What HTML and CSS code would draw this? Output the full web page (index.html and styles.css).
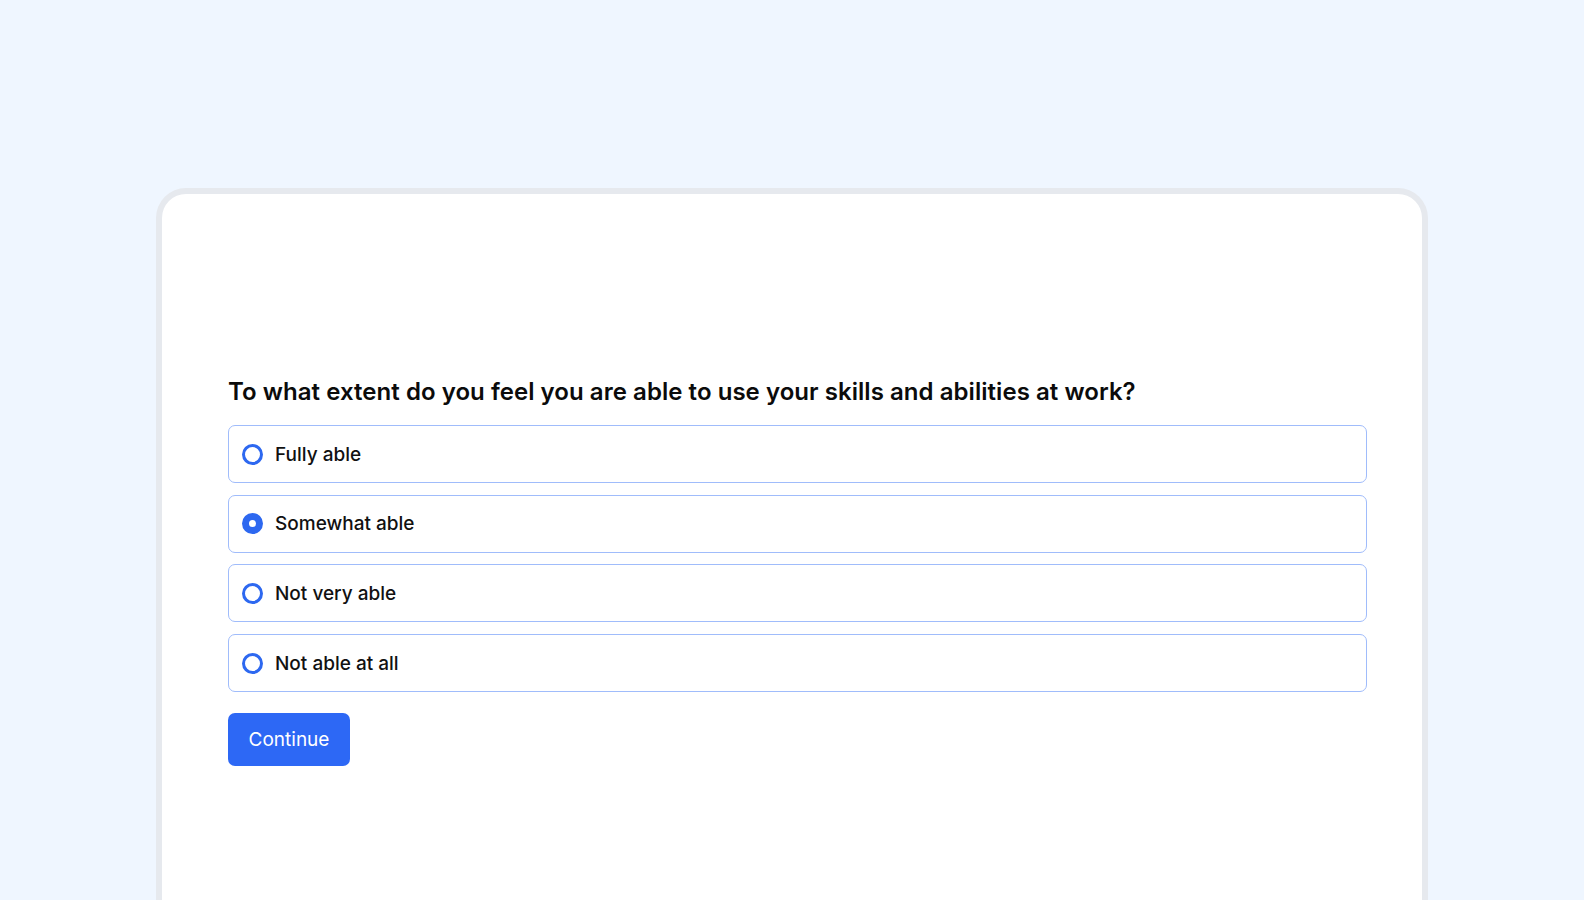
FILE: index.html
```html
<!DOCTYPE html>
<html lang="en">
<head>
    <meta charset="UTF-8">
    <meta name="viewport" content="width=device-width, initial-scale=1.0">
    <title>Survey</title>
    <link rel="stylesheet" href="styles.css">
</head>
<body>
    <div class="frame">
        <div class="card">
            <form class="question">
                <h2 class="title">To what extent do you feel you are able to use your skills and abilities at work?</h2>
                <div class="options">
                    <label class="option">
                        <input type="radio" name="skills" value="fully">
                        <span>Fully able</span>
                    </label>
                    <label class="option">
                        <input type="radio" name="skills" value="somewhat" checked>
                        <span>Somewhat able</span>
                    </label>
                    <label class="option">
                        <input type="radio" name="skills" value="not-very">
                        <span>Not very able</span>
                    </label>
                    <label class="option">
                        <input type="radio" name="skills" value="not-at-all">
                        <span>Not able at all</span>
                    </label>
                </div>
                <button type="button" class="continue">Continue</button>
            </form>
        </div>
    </div>
</body>
</html>
```

FILE: styles.css
```css
html, body {
    margin: 0;
    height: 100%;
}

body {
    background: #eff6ff;
    font-family: Inter, "Noto Sans", Arial, sans-serif;
    color: #111111;
    overflow: hidden;
}

.frame {
    height: 100%;
    box-sizing: border-box;
    padding: 188px 156px 0 156px;
}

.card {
    height: 100%;
    box-sizing: border-box;
    background: #ffffff;
    border: 6px solid #e6e9ee;
    border-bottom: none;
    border-radius: 30px 30px 0 0;
    padding: 182px 55px 0 66px;
}

.title {
    margin: 0 0 17px 0;
    font-size: 24px;
    line-height: 32px;
    font-weight: 600;
    letter-spacing: 0.05px;
    color: #0b0b0b;
}

.options {
    display: flex;
    flex-direction: column;
    gap: 11.7px;
}

.option {
    display: flex;
    align-items: center;
    gap: 12px;
    height: 58px;
    box-sizing: border-box;
    padding: 0 13px;
    border: 1.5px solid #a0bcfb;
    border-radius: 7px;
    font-size: 19px;
    font-weight: 500;
    color: #111111;
    cursor: pointer;
}

.option input {
    appearance: none;
    -webkit-appearance: none;
    margin: 0;
    width: 21px;
    height: 21px;
    box-sizing: border-box;
    border: 3px solid #2d68f0;
    border-radius: 50%;
    background: #ffffff;
}

.option input:checked {
    border: 7px solid #2d68f0;
}

.continue {
    margin-top: 21px;
    width: 122px;
    height: 53px;
    border: none;
    border-radius: 7px;
    background: #2d68f5;
    color: #ffffff;
    font-family: inherit;
    font-size: 19px;
    cursor: pointer;
}

.continue:hover {
    background: #1f56e0;
}
```
